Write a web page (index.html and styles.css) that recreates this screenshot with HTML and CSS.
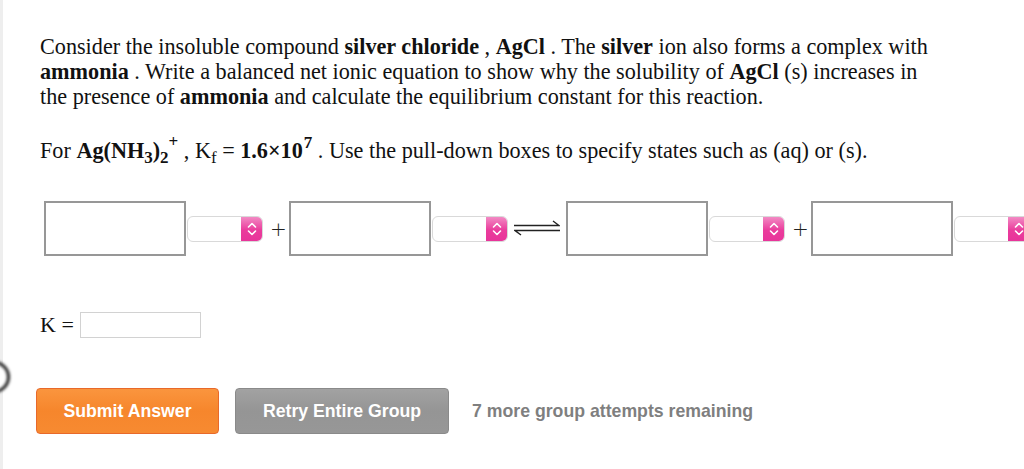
FILE: index.html
```html
<!DOCTYPE html>
<html>
<head>
<meta charset="utf-8">
<link rel="stylesheet" href="styles.css">
</head>
<body>
<div class="edge"></div>
<div class="knob"></div>
<main class="page">
  <p class="q">Consider the insoluble compound <b>silver chloride</b> , <b>AgCl</b> . The <b>silver</b> ion also forms a complex with <b>ammonia</b> . Write a balanced net ionic equation to show why the solubility of <b>AgCl</b> (s) increases in the presence of <b>ammonia</b> and calculate the equilibrium constant for this reaction.</p>
  <p class="q q2">For <b>Ag(NH<sub>3</sub>)<sub>2</sub><sup class="chg">+</sup></b> , K<sub>f</sub> = <b>1.6×10<sup>7</sup></b> . Use the pull-down boxes to specify states such as (aq) or (s).</p>

  <div class="eqrow">
    <div class="box"></div>
    <div class="sel"><span class="sel-blank"></span><span class="sel-btn"><svg width="10" height="16" viewBox="0 0 10 16"><path d="M1.5 6 L5 2.5 L8.5 6 M1.5 10 L5 13.5 L8.5 10" fill="none" stroke="#fff" stroke-width="1.6" stroke-linecap="round" stroke-linejoin="round"/></svg></span></div>
    <span class="plus">+</span>
    <div class="box"></div>
    <div class="sel"><span class="sel-blank"></span><span class="sel-btn"><svg width="10" height="16" viewBox="0 0 10 16"><path d="M1.5 6 L5 2.5 L8.5 6 M1.5 10 L5 13.5 L8.5 10" fill="none" stroke="#fff" stroke-width="1.6" stroke-linecap="round" stroke-linejoin="round"/></svg></span></div>
    <svg class="eqarrow" width="46" height="18" viewBox="0 0 46 18"><path d="M0 6.5 H45 L39 2 M46 11.5 H1 L7 16" fill="none" stroke="#222" stroke-width="1.4"/></svg>
    <div class="box"></div>
    <div class="sel"><span class="sel-blank"></span><span class="sel-btn"><svg width="10" height="16" viewBox="0 0 10 16"><path d="M1.5 6 L5 2.5 L8.5 6 M1.5 10 L5 13.5 L8.5 10" fill="none" stroke="#fff" stroke-width="1.6" stroke-linecap="round" stroke-linejoin="round"/></svg></span></div>
    <span class="plus">+</span>
    <div class="box"></div>
    <div class="sel"><span class="sel-blank"></span><span class="sel-btn"><svg width="10" height="16" viewBox="0 0 10 16"><path d="M1.5 6 L5 2.5 L8.5 6 M1.5 10 L5 13.5 L8.5 10" fill="none" stroke="#fff" stroke-width="1.6" stroke-linecap="round" stroke-linejoin="round"/></svg></span></div>
  </div>

  <div class="krow">
    <span class="klabel">K =</span>
    <div class="kbox"></div>
  </div>

  <div class="actions">
    <div class="btn btn-submit">Submit Answer</div>
    <div class="btn btn-retry">Retry Entire Group</div>
    <span class="remain">7 more group attempts remaining</span>
  </div>
</main>
</body>
</html>
```

FILE: styles.css
```css
html, body {
  margin: 0;
  padding: 0;
  background: #fff;
  overflow: hidden;
  width: 1024px;
  height: 469px;
}

body {
  position: relative;
  font-family: "Liberation Serif", "Times New Roman", serif;
  color: #111;
}

.edge {
  position: absolute;
  left: 0;
  top: 0;
  width: 3px;
  height: 469px;
  background: #eeeeee;
}

.knob {
  position: absolute;
  left: -22px;
  top: 361px;
  width: 26px;
  height: 26px;
  border-radius: 50%;
  background: #fff;
  border: 3px solid #1a1a1a;
  filter: blur(1.4px);
}

.page {
  padding: 34px 0 0 40px;
  width: 1100px;
}

.q {
  margin: 0;
  width: 895px;
  font-size: 22.2px;
  line-height: 25px;
}

.q2 {
  margin-top: 29px;
}

.q sub, .q sup {
  font-size: 17px;
  line-height: 0;
  position: relative;
  vertical-align: baseline;
}

.q sub { top: 5px; }
.q sup { top: -10px; margin-left: 1px; }
.q sup.chg { margin-left: 0; top: -11px; }

.eqrow {
  display: flex;
  align-items: center;
  margin-top: 38px;
  margin-left: 4px;
  height: 55px;
}

.box {
  box-sizing: border-box;
  width: 142px;
  height: 55px;
  border: 2px solid #979797;
  background: #fff;
  flex: none;
}

.sel {
  box-sizing: border-box;
  display: flex;
  width: 76px;
  height: 26px;
  margin-left: 1px;
  border: 1px solid #d9d9d9;
  border-radius: 6px;
  overflow: hidden;
  background: #fff;
  flex: none;
}

.sel-blank {
  flex: 1;
}

.sel-btn {
  width: 21px;
  display: flex;
  align-items: center;
  justify-content: center;
  background: linear-gradient(#f28ac4, #ea3c9c 55%, #e8349a);
}

.plus {
  font-family: "DejaVu Sans", "Liberation Sans", sans-serif;
  font-size: 20px;
  font-weight: 200;
  color: #222;
  width: 13px;
  margin: 0 6px 0 7px;
  text-align: center;
  line-height: 20px;
  flex: none;
}

.eqarrow {
  margin: 0 6px;
  flex: none;
  position: relative;
  top: -1px;
}

.krow {
  display: flex;
  align-items: center;
  margin-top: 56px;
  height: 26px;
}

.klabel {
  font-size: 22px;
  width: 40px;
}

.kbox {
  box-sizing: border-box;
  width: 121px;
  height: 26px;
  border: 1px solid #d2d2d2;
  background: #fff;
}

.actions {
  display: flex;
  align-items: center;
  margin-top: 50px;
  margin-left: -4px;
  font-family: "Liberation Sans", Arial, Helvetica, sans-serif;
  font-weight: bold;
  font-size: 17.7px;
}

.btn {
  box-sizing: border-box;
  height: 46px;
  display: flex;
  align-items: center;
  justify-content: center;
  color: #fff;
  border-radius: 4px;
  flex: none;
}

.btn-submit {
  width: 183px;
  background: linear-gradient(#fa953e, #f6862c 50%, #f78a31);
  border: 1px solid #e8692a;
}

.btn-retry {
  width: 214px;
  margin-left: 16px;
  background: linear-gradient(#a2a2a2, #959595 50%, #979797);
  border: 1px solid #8a8a8a;
}

.remain {
  margin-left: 23px;
  color: #7f7f7f;
}
```
